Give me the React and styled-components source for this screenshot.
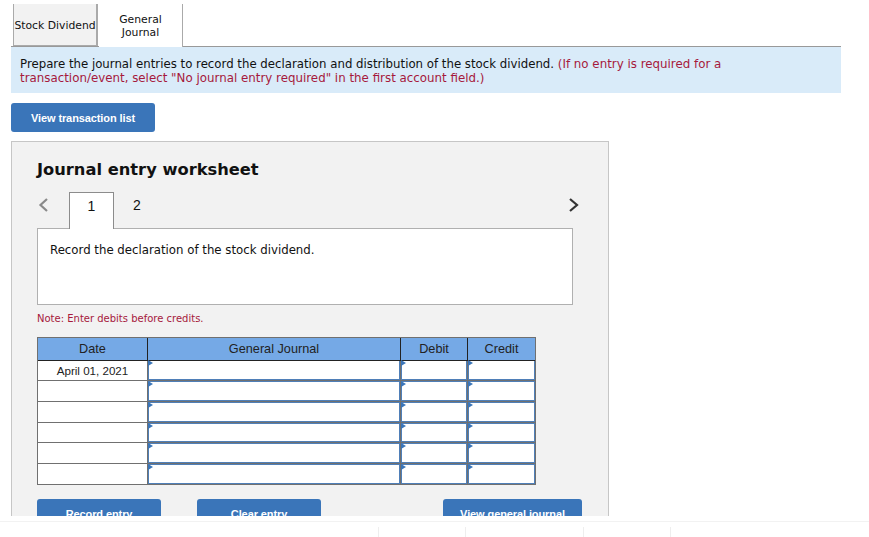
import React from "react";
import styled, { createGlobalStyle } from "styled-components";

const Global = createGlobalStyle`
  html, body { margin: 0; padding: 0; background: #fff; }
  body { font-family: "DejaVu Sans", Verdana, sans-serif; color: #111; overflow: hidden; }
  * { box-sizing: border-box; }
`;
const Page = styled.div`width: 869px; height: 537px; overflow: hidden; display: flex; flex-direction: column;`;
const Viewport = styled.div`height: 516px; overflow: hidden; padding: 4px 28px 0 11px; flex: none;`;
const TabBar = styled.div`display: flex; height: 43px; padding-left: 2px; border-bottom: 1px solid #999;`;
const TopTab = styled.div`
  width: ${p => p.$w}px; display: flex; align-items: center; justify-content: center; text-align: center;
  font-size: 10.8px; line-height: 13px; padding-top: 1px;
  background: ${p => p.$active ? "#fff" : "#f2f2f2"};
  border: 1px solid #aaa; border-top: 0; border-right: ${p => p.$active ? "1px" : "2px"} solid #aaa;
  border-left-width: ${p => p.$active ? "0" : "1px"};
  margin-right: ${p => p.$active ? 0 : 1}px;
  height: ${p => p.$active ? "43px" : "42px"};
  border-bottom: ${p => p.$active ? "0" : "1px solid #aaa"};
  white-space: nowrap;
`;
const Banner = styled.div`height: 46px; background: #d9ebf9; padding: 10px 105px 0 9px; font-size: 11.75px; line-height: 14px;`;
const Alert = styled.span`color: #a6193c; font-size: 11.85px;`;
const Button = styled.div`
  width: ${p => p.$w}px; height: 29px; flex: none; background: #3a75b9; color: #fff; border-radius: 3px;
  display: flex; align-items: center; justify-content: center;
  font: bold 11px "Liberation Sans", Arial, sans-serif; letter-spacing: -0.1px;
`;
const TopButton = styled(Button)`margin-top: 10px;`;
const Panel = styled.div`
  width: 598px; margin-top: 9px; height: 400px; background: #f2f2f2; border: 1px solid #c6c6c6; border-bottom: 0; padding: 0 0 0 25px;
`;
const Heading = styled.h2`margin: 16px 0 0; height: 24px; font-size: 16.3px; line-height: 24px; font-weight: bold; color: #111;`;
const Stepper = styled.div`display: flex; align-items: flex-start; width: 544px; height: 38px; margin-top: 10px; position: relative; z-index: 1;`;
const ChevronBox = styled.div`width: ${p => p.$w}px; flex: none; height: 26px; display: flex; align-items: center;`;
const Step = styled.div`
  width: ${p => p.$active ? 45 : 46}px; height: 37px; padding-top: 5px; text-align: center;
  font: 14px/16px "Liberation Sans", Arial, sans-serif; color: #111;
  ${p => p.$active ? "background:#fff;border:1px solid #8c8c8c;border-bottom:0;" : ""}
`;
const Spacer = styled.div`flex: 1;`;
const Prompt = styled.div`
  width: 536px; height: 77px; margin-top: -2px; background: #fff; border: 1px solid #b0b0b0; padding: 14px 12px 0;
  font-size: 11.75px; line-height: 15px;
`;
const Note = styled.div`margin-top: 7px; height: 13px; font-size: 10px; line-height: 13px; color: #a6193c;`;
const Table = styled.table`
  margin: 12px 0 0; border-collapse: separate; border-spacing: 0; table-layout: fixed; width: 499px; height: 148px;
  font: 12.7px "Liberation Sans", Arial, sans-serif; border: 1px solid #707070; background: #fff;
`;
const Head = styled.th`
  height: 23px; background: #75a9e6; font-weight: normal; color: #222; padding: 0 0 1px; text-align: center;
  border-bottom: 1px solid #222; border-right: 1px solid #222;
  &:last-child { border-right: 0; }
`;
const Row = styled.tr`height: ${p => p.$h}px;`;
const DateCell = styled.td`
  background: #fff; padding: 0; text-align: center; color: #222; font-size: 11.6px;
  border-right: 1px solid #707070;
  tr:not(:last-child) > & { border-bottom: 1px solid #707070; }
`;
const EntryCell = styled.td`
  padding: 0; background: #fff; position: relative; border-right: 1px solid #707070;
  &:last-child { border-right: 0; }
  tr:not(:last-child) > & { border-bottom: 1px solid #707070; }
`;
const EntryBox = styled.div`
  position: absolute; inset: 0; border: 1px solid #4f7fb8;
  tr:first-child & { border-top: 0; }
  &::before {
    content: ""; position: absolute; left: -1px; top: -1px; border-left: 5px solid #3a75b9;
    border-top: 3px solid transparent; border-bottom: 3px solid transparent;
  }
`;
const ActionBar = styled.div`display: flex; width: 545px; margin-top: 14px;`;
const ActionGap = styled.div`width: ${p => p.$w}px;`;
const Footer = styled.div`flex: 1; border-top: 1px solid #f2f2f2; margin-top: 5px; padding-top: 5px; display: flex;`;
const FooterCell = styled.div`width: ${p => p.$w}px; border-right: ${p => p.$line ? "1px solid #eee" : "0"};`;

const heights = [20, 21, 21, 20, 21, 20];

function Chevron({ color, d }) {
  return (
    <svg width="12" height="16" viewBox="0 0 12 16" fill="none" stroke={color} strokeWidth="2.2">
      <path d={d} />
    </svg>
  );
}

export default function App() {
  return (
    <Page>
      <Global />
      <Viewport>
        <TabBar>
          <TopTab $w={85}>Stock Dividend</TopTab>
          <TopTab $w={84} $active>General<br />Journal</TopTab>
        </TabBar>
        <Banner>
          Prepare the journal entries to record the declaration and distribution of the stock dividend. <Alert>(If no entry is required for a transaction/event, select "No journal entry required" in the first account field.)</Alert>
        </Banner>
        <TopButton $w={144}>View transaction list</TopButton>
        <Panel>
          <Heading>Journal entry worksheet</Heading>
          <Stepper>
            <ChevronBox $w={32}><Chevron color="#8a8a8a" d="M10 2 L3.5 8 L10 14" /></ChevronBox>
            <Step $active>1</Step>
            <Step>2</Step>
            <Spacer />
            <ChevronBox $w={13}><Chevron color="#333" d="M2 2 L9 8 L2 14" /></ChevronBox>
          </Stepper>
          <Prompt>Record the declaration of the stock dividend.</Prompt>
          <Note>Note: Enter debits before credits.</Note>
          <Table>
            <colgroup><col width="110" /><col width="253" /><col width="67" /><col width="67" /></colgroup>
            <thead>
              <tr><Head>Date</Head><Head>General Journal</Head><Head>Debit</Head><Head>Credit</Head></tr>
            </thead>
            <tbody>
              {heights.map((h, i) => (
                <Row key={i} $h={h}>
                  <DateCell>{i === 0 ? "April 01, 2021" : ""}</DateCell>
                  <EntryCell><EntryBox /></EntryCell>
                  <EntryCell><EntryBox /></EntryCell>
                  <EntryCell><EntryBox /></EntryCell>
                </Row>
              ))}
            </tbody>
          </Table>
          <ActionBar>
            <Button $w={124}>Record entry</Button>
            <ActionGap $w={36} />
            <Button $w={124}>Clear entry</Button>
            <ActionGap $w={122} />
            <Button $w={139}>View general journal</Button>
          </ActionBar>
        </Panel>
      </Viewport>
      <Footer>
        <FooterCell $w={379} $line />
        <FooterCell $w={87} $line />
        <FooterCell $w={118} $line />
        <FooterCell $w={87} $line />
      </Footer>
    </Page>
  );
}
